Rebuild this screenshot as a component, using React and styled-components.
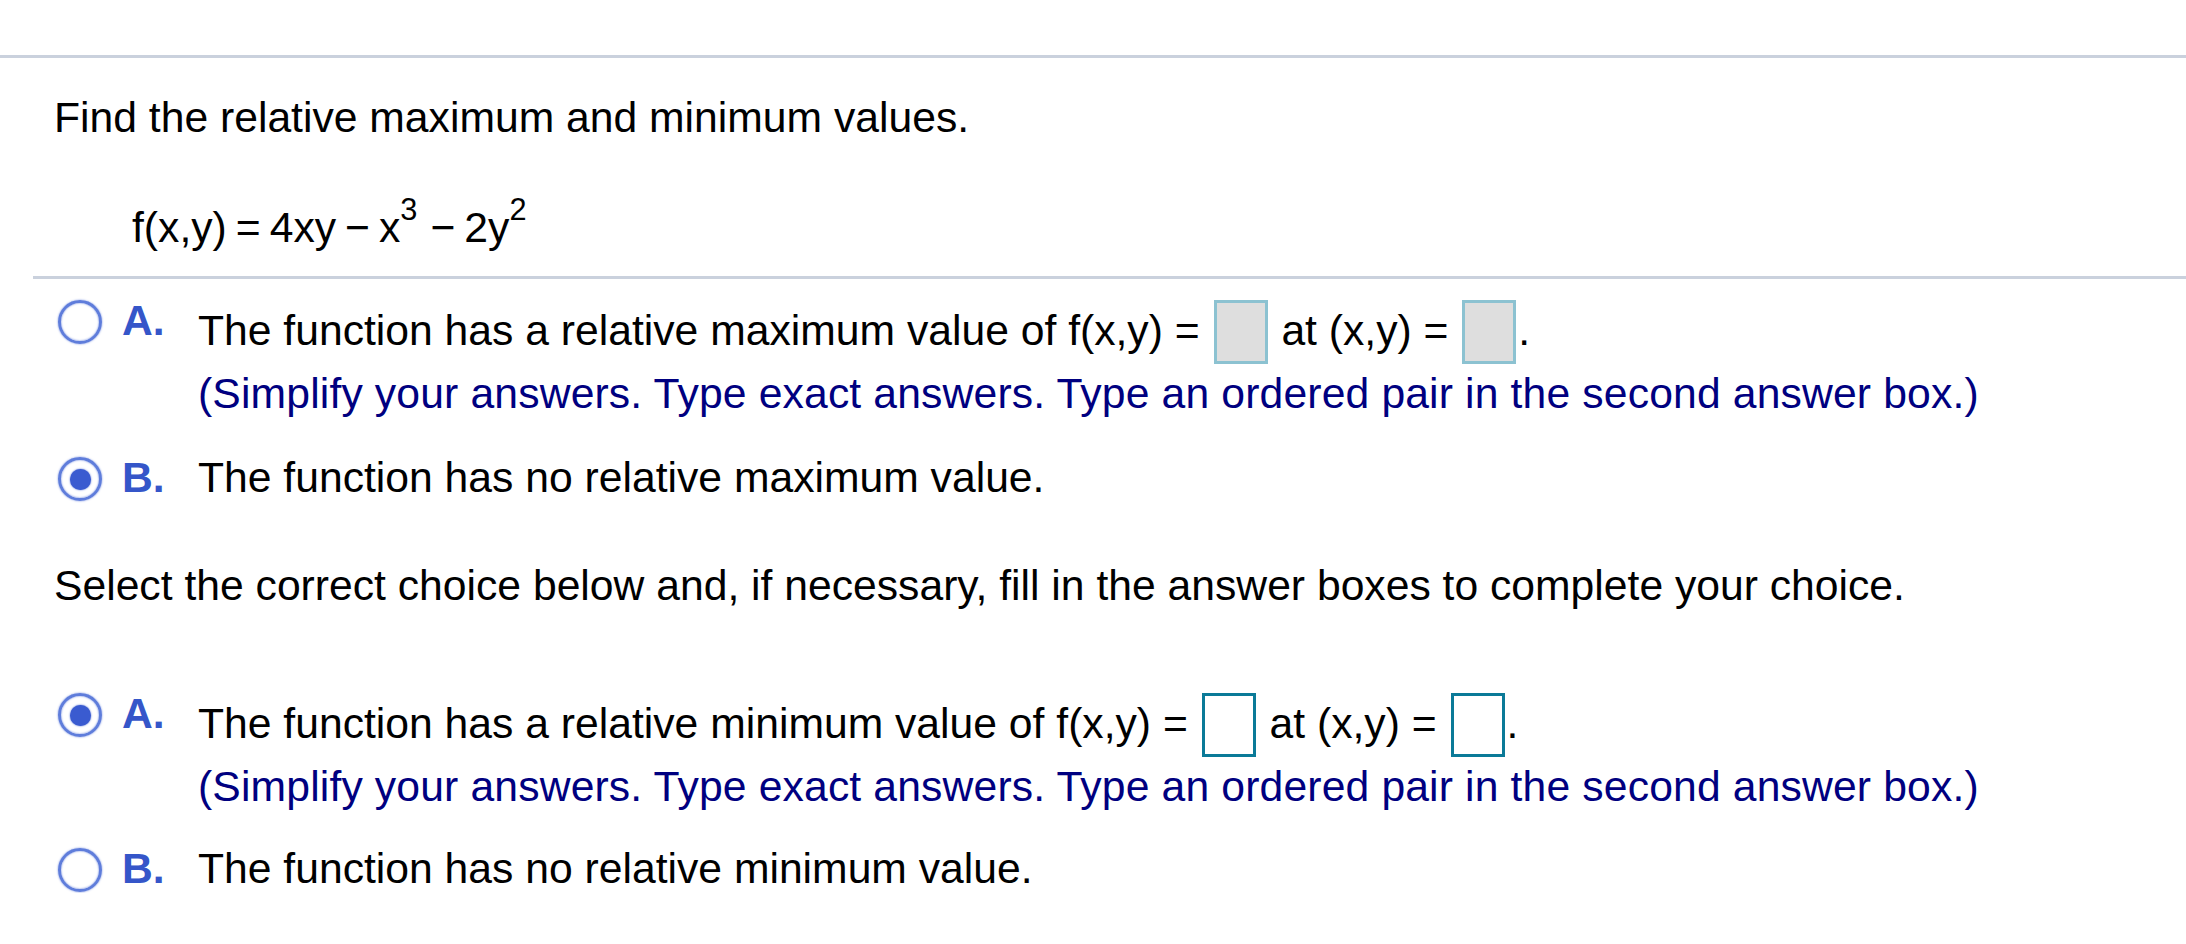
import React from "react";
import styled, { createGlobalStyle } from "styled-components";

const GlobalStyle = createGlobalStyle`
  html, body {
    margin: 0;
    padding: 0;
    background: #fff;
  }
  body {
    font-family: "Liberation Sans", Arial, sans-serif;
    color: #000;
  }
`;

const Page = styled.div`
  width: 2186px;
  font-size: 42.67px;
  line-height: 49px;
`;

const Rule = styled.div`
  height: 3px;
  background: #cad1dd;
  margin: ${(p) => p.$margin};
`;

const Question = styled.div`
  padding-left: 54px;
`;

const Prompt = styled.p`
  margin: 35px 0 0;
`;

const Formula = styled.div`
  margin: 61px 0 0 78px;
  white-space: nowrap;
`;

const Op = styled.span`
  margin: 0 9px;
`;

const Sup = styled.sup`
  font-size: 0.72em;
  line-height: 0;
  vertical-align: 22px;
  padding-right: 4px;
`;

const Answers = styled.div`
  padding-left: 54px;
`;

const Instruction = styled.p`
  margin: 59px 0 0;
`;

const ChoiceList = styled.div`
  display: flex;
  flex-direction: column;
  gap: ${(p) => p.$gap}px;
  margin-top: ${(p) => p.$top}px;
  padding-left: 4px;
`;

const Choice = styled.div`
  display: flex;
  align-items: flex-start;
`;

const Radio = styled.span`
  flex: none;
  box-sizing: border-box;
  width: 44px;
  height: 44px;
  margin: 4px 20px 0 0;
  border-radius: 50%;
  border: 3px solid #5f7ddb;
  box-shadow: 0 0 2px rgba(80, 112, 216, 0.85),
    inset 0 0 2px rgba(80, 112, 216, 0.85);
  display: flex;
  align-items: center;
  justify-content: center;

  &::after {
    content: "";
    display: ${(p) => (p.$checked ? "block" : "none")};
    width: 21px;
    height: 21px;
    border-radius: 50%;
    background: #3a5bd0;
    box-shadow: 0 0 2px #3a5bd0;
  }
`;

const Letter = styled.span`
  flex: none;
  width: 76px;
  font-weight: bold;
  color: #3556c9;
`;

const Body = styled.div`
  margin-top: ${(p) => (p.$boxed ? 4 : 0)}px;
  white-space: nowrap;
`;

const Hint = styled.div`
  margin-top: 5px;
  color: #000080;
  letter-spacing: 0.15px;
`;

const AnswerBox = styled.span`
  display: inline-block;
  box-sizing: border-box;
  width: 54px;
  height: 64px;
  margin: 0 2px;
  vertical-align: -19px;
  border: 3px solid ${(p) => (p.$disabled ? "#8cc2d1" : "#0b7a98")};
  background: ${(p) => (p.$disabled ? "#dedede" : "#fff")};
`;

const HINT =
  "(Simplify your answers. Type exact answers. Type an ordered pair in the second answer box.)";

function ValueChoice({ letter, checked, kind, disabled }) {
  return (
    <Choice>
      <Radio $checked={checked} />
      <Letter>{letter}.</Letter>
      <Body $boxed>
        <div>
          The function has a relative {kind} value of f(x,y) ={" "}
          <AnswerBox $disabled={disabled} /> at (x,y) ={" "}
          <AnswerBox $disabled={disabled} />.
        </div>
        <Hint>{HINT}</Hint>
      </Body>
    </Choice>
  );
}

function NoneChoice({ letter, checked, kind }) {
  return (
    <Choice>
      <Radio $checked={checked} />
      <Letter>{letter}.</Letter>
      <Body>The function has no relative {kind} value.</Body>
    </Choice>
  );
}

export default function App() {
  return (
    <>
      <GlobalStyle />
      <Page>
        <Rule $margin="55px 0 0" />
        <Question>
          <Prompt>Find the relative maximum and minimum values.</Prompt>
          <Formula>
            f(x,y)<Op>=</Op>4xy<Op>−</Op>x<Sup>3</Sup>
            <Op>−</Op>2y<Sup>2</Sup>
          </Formula>
        </Question>
        <Rule $margin="24px 0 0 33px" />
        <Answers>
          <ChoiceList $top={17} $gap={35}>
            <ValueChoice letter="A" kind="maximum" disabled />
            <NoneChoice letter="B" kind="maximum" checked />
          </ChoiceList>
          <Instruction>
            Select the correct choice below and, if necessary, fill in the
            answer boxes to complete your choice.
          </Instruction>
          <ChoiceList $top={79} $gap={33}>
            <ValueChoice letter="A" kind="minimum" checked />
            <NoneChoice letter="B" kind="minimum" />
          </ChoiceList>
        </Answers>
      </Page>
    </>
  );
}
